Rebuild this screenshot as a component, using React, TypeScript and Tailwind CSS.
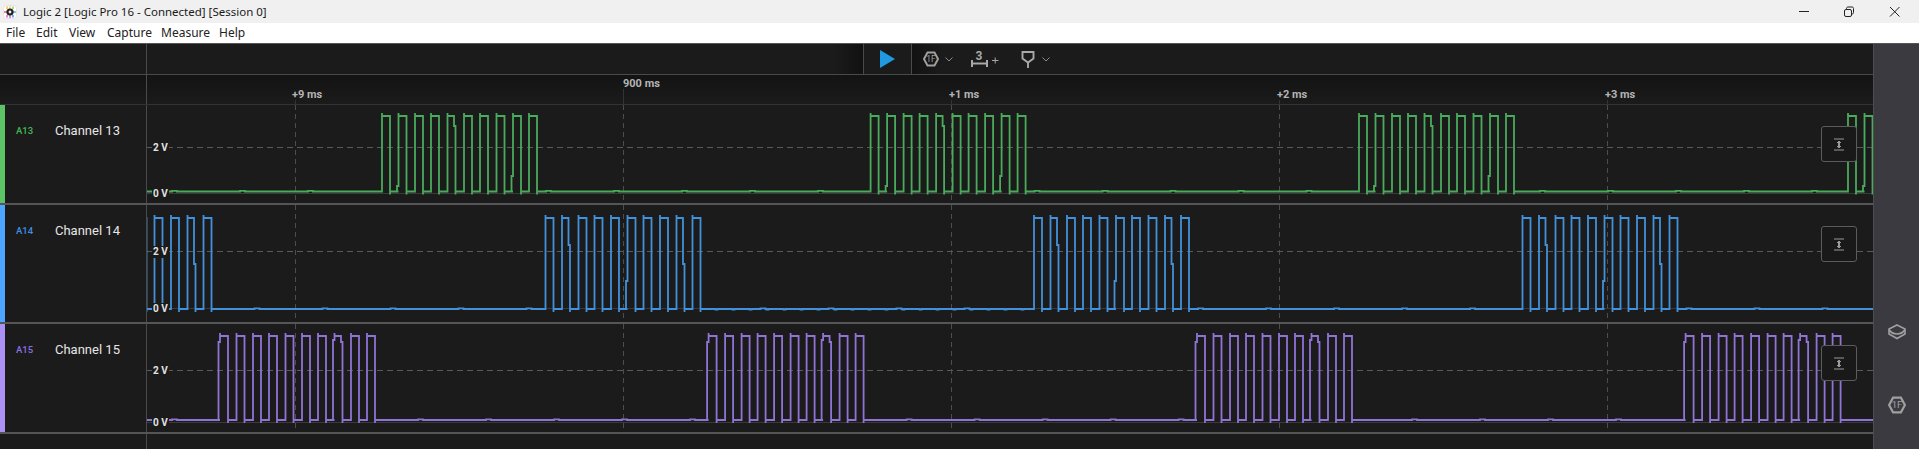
const ticks = [295, 623, 951, 1279, 1607];

interface Glitch {
  riseY?: number;
  fallY?: number;
}

interface ChannelProps {
  id: string;
  name: string;
  top: number;
  height: number;
  high: number;
  low: number;
  midY: number;
  zeroY: number;
  chipClass: string;
  barClass: string;
  stroke: string;
  bursts: number[];
  glitches: { [key: number]: Glitch };
}

const offsets = [0, 16.5, 33, 49, 65.5, 82, 98, 114.5, 131, 147];

// small wobble on the idle level so the trace doesn't look ruled
function idleRun(from: number, to: number, low: number) {
  let d = '';
  let i = Math.floor(from);
  for (let x = from + 9; x < to - 6; x += 17) {
    i += 7;
    if (i % 4 === 0) d += ` H${x} V${low - 0.6} H${x + 5} V${low}`;
    if (i % 7 === 0) d += ` H${x + 6} V${low + 0.6} H${x + 8} V${low}`;
  }
  return d + ` H${to}`;
}

function tracePath(bursts: number[], high: number, low: number, glitches: { [key: number]: Glitch }) {
  let d = `M146 ${low}`;
  let cursor = 146;
  bursts.forEach((start) => {
    offsets.forEach((off, idx) => {
      const rise = start + off;
      const fall = rise + 8;
      const g = glitches[idx] || {};
      if (idx === 0 && rise > cursor) d += idleRun(cursor, rise, low);
      else d += ` H${rise}`;
      if (g.riseY) d += ` V${low} H${rise - 1.5} V${g.riseY} H${rise}`;
      d += ` V${high - 3} V${high} H${fall - (g.fallY ? 1.5 : 0)}`;
      if (g.fallY) d += ` V${g.fallY} H${fall}`;
      d += ` V${low + 3} V${low}`;
      cursor = fall;
    });
  });
  d += idleRun(cursor, 1873, low);
  return d;
}

function Channel(props: ChannelProps) {
  const { id, name, top, height, high, low, midY, zeroY, chipClass, barClass, stroke, bursts, glitches } = props;
  return (
    <div className="flex border-b-2 border-[#555557]" style={{ height: height + 2 }}>
      <div className="w-[147px] shrink-0 flex border-r border-[#4a4a4a]">
        <div className={`w-[5px] ${barClass}`} />
        <div className="flex items-start pt-[16px]">
          <span className={`w-[50px] pl-[11px] pt-[3px] text-[9.5px] font-medium ${chipClass}`}>{id}</span>
          <span className="text-[13px] leading-[19px] text-[#e6e6e6]">{name}</span>
        </div>
      </div>
      <div className="flex-1 relative overflow-hidden">
        <svg className="block" width="1726" height={height} viewBox={`147 ${top} 1726 ${height}`} fill="none">
          {ticks.map((x) => (
            <line key={x} x1={x + 0.5} x2={x + 0.5} y1={top} y2={top + height} stroke="#4d4d4d" strokeDasharray="5 4" />
          ))}
          <line x1="147" x2="1873" y1={midY + 0.5} y2={midY + 0.5} stroke="#5a5a5a" strokeDasharray="6 4" />
          <line x1="147" x2="1873" y1={zeroY + 0.5} y2={zeroY + 0.5} stroke="#3a3a3a" />
          <path d={tracePath(bursts, high, low, glitches)} stroke={stroke} strokeWidth="1.8" />
        </svg>
        <span className="absolute left-[5px] px-[1px] bg-[#1a1a1a] text-[10px] leading-[12px] font-bold text-[#e2e2e2]" style={{ top: midY - top - 5 }}>2 V</span>
        <span className="absolute left-[5px] px-[1px] bg-[#1a1a1a] text-[10px] leading-[12px] font-bold text-[#e2e2e2]" style={{ top: zeroY - top - 5 }}>0 V</span>
        <button className="absolute right-[16px] top-[21px] w-[36px] h-[36px] rounded-[3px] border border-[#5c5c5c] bg-[#191919] flex items-center justify-center">
          <svg width="12" height="13" viewBox="0 0 12 13" fill="none">
            <path d="M1 1H11M1 12H11" stroke="#9a9a9a" />
            <path d="M6 3V10" stroke="#9a9a9a" strokeWidth="2" />
            <path d="M4 5L6 3L8 5M4 8L6 10L8 8" stroke="#9a9a9a" />
          </svg>
        </button>
      </div>
    </div>
  );
}

function HexIcon({ size }: { size: number }) {
  return (
    <svg width={size} height={size} viewBox="0 0 16 16" fill="none">
      <path d="M4.5 1.5H11.5L15 8L11.5 14.5H4.5L1 8Z" stroke="#a0a0a0" strokeWidth="1.9" />
      <text x="8" y="11" textAnchor="middle" fontSize="8.5" fill="#a0a0a0" fontFamily="Roboto, sans-serif">1F</text>
    </svg>
  );
}

function Chevron() {
  return (
    <svg width="8" height="5" viewBox="0 0 8 5" fill="none">
      <path d="M0.5 0.5L4 4L7.5 0.5" stroke="#8a8a8a" />
    </svg>
  );
}

function Logo() {
  return (
    <svg width="14" height="14" viewBox="0 0 14 14" fill="none">
      <rect x="0.5" y="0.5" width="13" height="13" rx="3" fill="#fff" stroke="#e4e4e4" />
      <path d="M4 1.5V4" stroke="#f5a623" strokeWidth="1.3" />
      <path d="M7 1V4" stroke="#f7d038" strokeWidth="1.3" />
      <path d="M10 1.5V4" stroke="#8bc34a" strokeWidth="1.3" />
      <path d="M10 7H13" stroke="#3aa6e8" strokeWidth="1.3" />
      <path d="M10 12.5V10" stroke="#4a78e8" strokeWidth="1.3" />
      <path d="M7 13V10" stroke="#8b5cf6" strokeWidth="1.3" />
      <path d="M4 12.5V10" stroke="#d946c8" strokeWidth="1.3" />
      <path d="M1 7H4" stroke="#ef4444" strokeWidth="1.3" />
      <circle cx="7" cy="7" r="3.6" fill="#222" />
      <circle cx="7" cy="7" r="1.4" fill="#eee" />
    </svg>
  );
}

const menus = [
  { label: 'File', w: 'w-[30px]' },
  { label: 'Edit', w: 'w-[33px]' },
  { label: 'View', w: 'w-[38px]' },
  { label: 'Capture', w: 'w-[54px]' },
  { label: 'Measure', w: 'w-[58px]' },
  { label: 'Help', w: 'w-[40px]' },
];

const rulerLabels = [
  { text: '+9 ms', cls: 'left-[145px] top-[13px]', tick: 'left-[148px] top-[25px] h-[5px]' },
  { text: '900 ms', cls: 'left-[476px] top-[2px]', tick: 'left-[476px] top-[14px] h-[16px]' },
  { text: '+1 ms', cls: 'left-[802px] top-[13px]', tick: 'left-[804px] top-[25px] h-[5px]' },
  { text: '+2 ms', cls: 'left-[1130px] top-[13px]', tick: 'left-[1132px] top-[25px] h-[5px]' },
  { text: '+3 ms', cls: 'left-[1458px] top-[13px]', tick: 'left-[1460px] top-[25px] h-[5px]' },
];

export default function App() {
  return (
    <div className="w-[1919px] h-[449px] overflow-hidden flex flex-col bg-[#1b1b1b] font-['Roboto',sans-serif]">
      {/* window title */}
      <div className="h-[23px] shrink-0 bg-[#f0f0f0] flex items-center pl-[3px] font-['Noto_Sans',sans-serif]">
        <Logo />
        <span className="ml-[6px] text-[11.5px] text-[#1a1a1a]">Logic 2 [Logic Pro 16 - Connected] [Session 0]</span>
        <div className="ml-auto flex items-center">
          <svg width="120" height="12" viewBox="0 0 120 12" fill="none">
            <path d="M0 5.5H10" stroke="#222" />
            <rect x="45.5" y="3.5" width="7" height="7" rx="1.5" stroke="#222" />
            <path d="M47.5 3V2.5C47.5 1.5 48 1 49 1H53C54 1 54.5 1.5 54.5 2.5V6.5C54.5 7.5 54 8 53 8" stroke="#222" />
            <path d="M91 1L100.5 10.5M100.5 1L91 10.5" stroke="#222" />
          </svg>
        </div>
      </div>
      {/* menu bar */}
      <div className="h-[20px] shrink-0 bg-white flex items-center pl-[6px] text-[12px] text-[#222] font-['Noto_Sans',sans-serif]">
        {menus.map((m) => (
          <span key={m.label} className={m.w}>{m.label}</span>
        ))}
      </div>

      <div className="flex-1 flex min-h-0 border-t border-[#565656]">
        <div className="flex-1 flex flex-col min-w-0">
          {/* toolbar */}
          <div className="h-[31px] shrink-0 flex border-b border-[#4a4a4a]">
            <div className="w-[147px] shrink-0 border-r border-[#4a4a4a]" />
            <div className="w-[716px] shrink-0 flex justify-end">
              <div className="w-[30px] bg-gradient-to-r from-transparent to-[#111111]" />
            </div>
            <div className="w-[49px] shrink-0 flex items-center justify-center border-x border-[#4a4a4a]">
              <svg width="15" height="18" viewBox="0 0 15 18">
                <path d="M0 0L15 9L0 18Z" fill="#1f9ae0" />
              </svg>
            </div>
            <div className="flex-1 flex items-center pl-[11px] bg-gradient-to-r from-[#121212] to-[#1b1b1b] to-[30px]">
              <HexIcon size={16} />
              <span className="ml-[6px]"><Chevron /></span>
              <svg width="28" height="18" viewBox="0 0 28 18" fill="none" className="ml-[18px]">
                <text x="8" y="9.5" textAnchor="middle" fontSize="12" fontWeight="700" fill="#a8a8a8" fontFamily="Roboto, sans-serif">3</text>
                <path d="M1 10V17M16 10V17" stroke="#a8a8a8" strokeWidth="2" />
                <path d="M1 13.5H16" stroke="#a8a8a8" strokeWidth="2" />
                <path d="M21 10.5H27.5M24.2 7.5V13.5" stroke="#a8a8a8" />
              </svg>
              <svg width="14" height="17" viewBox="0 0 14 17" fill="none" className="ml-[22px]">
                <path d="M1.5 1H12.5V7.5L7 11.5L1.5 7.5Z" stroke="#a8a8a8" strokeWidth="1.9" />
                <path d="M7 11V17" stroke="#a8a8a8" strokeWidth="1.9" />
              </svg>
              <span className="ml-[7px]"><Chevron /></span>
            </div>
          </div>

          {/* time ruler */}
          <div className="h-[30px] shrink-0 flex bg-gradient-to-b from-[#131313] to-[#1b1b1b] border-b border-[#333335]">
            <div className="w-[147px] shrink-0 border-r border-[#4a4a4a]" />
            <div className="flex-1 relative">
              {rulerLabels.map((l) => (
                <span key={l.text}>
                  <span className={`absolute ${l.cls} text-[11px] leading-[13px] font-bold text-[#b4b4b4]`}>{l.text}</span>
                  <span className={`absolute ${l.tick} w-px bg-[#333333]`} />
                </span>
              ))}
            </div>
          </div>

          <Channel
            id="A13" name="Channel 13" top={105} height={98} high={116} low={191.5} midY={147} zeroY={193}
            chipClass="text-[#46b556]" barClass="bg-[#5cc466]" stroke="#4aab5b"
            bursts={[382, 870.6, 1359, 1848]}
            glitches={{ 1: { riseY: 186 }, 4: { fallY: 126 }, 8: { riseY: 176 } }}
          />
          <Channel
            id="A14" name="Channel 14" top={205} height={117} high={218} low={309} midY={251} zeroY={308}
            chipClass="text-[#3f8fe0]" barClass="bg-[#4da6ff]" stroke="#4291da"
            bursts={[56.5, 545.5, 1034, 1522.5]}
            glitches={{ 1: { fallY: 245 }, 5: { riseY: 281 }, 8: { fallY: 264 } }}
          />
          <Channel
            id="A15" name="Channel 15" top={324} height={108} high={336} low={420} midY={370} zeroY={422}
            chipClass="text-[#8a6fe0]" barClass="bg-[#ab90f5]" stroke="#9173d6"
            bursts={[220, 708.6, 1197, 1685.6]}
            glitches={{ 0: { riseY: 342 }, 7: { riseY: 340, fallY: 342 } }}
          />
          <div className="flex-1 flex">
            <div className="w-[147px] shrink-0 border-r border-[#4a4a4a]" />
          </div>
        </div>

        {/* right rail */}
        <div className="w-[46px] shrink-0 bg-[#3a3a40] border-l border-[#4c4c52] flex flex-col items-center pt-[280px] gap-[56px]">
          <svg width="18" height="16" viewBox="0 0 18 16" fill="none">
            <path d="M9 1L17 5V10L9 14.5L1 10V5Z" stroke="#a0a0a0" strokeWidth="1.6" />
            <path d="M1 5.5C3 9 6 10 9 10C12 10 15 9 17 5.5" stroke="#a0a0a0" strokeWidth="1.6" />
          </svg>
          <HexIcon size={18} />
        </div>
      </div>
    </div>
  );
}
